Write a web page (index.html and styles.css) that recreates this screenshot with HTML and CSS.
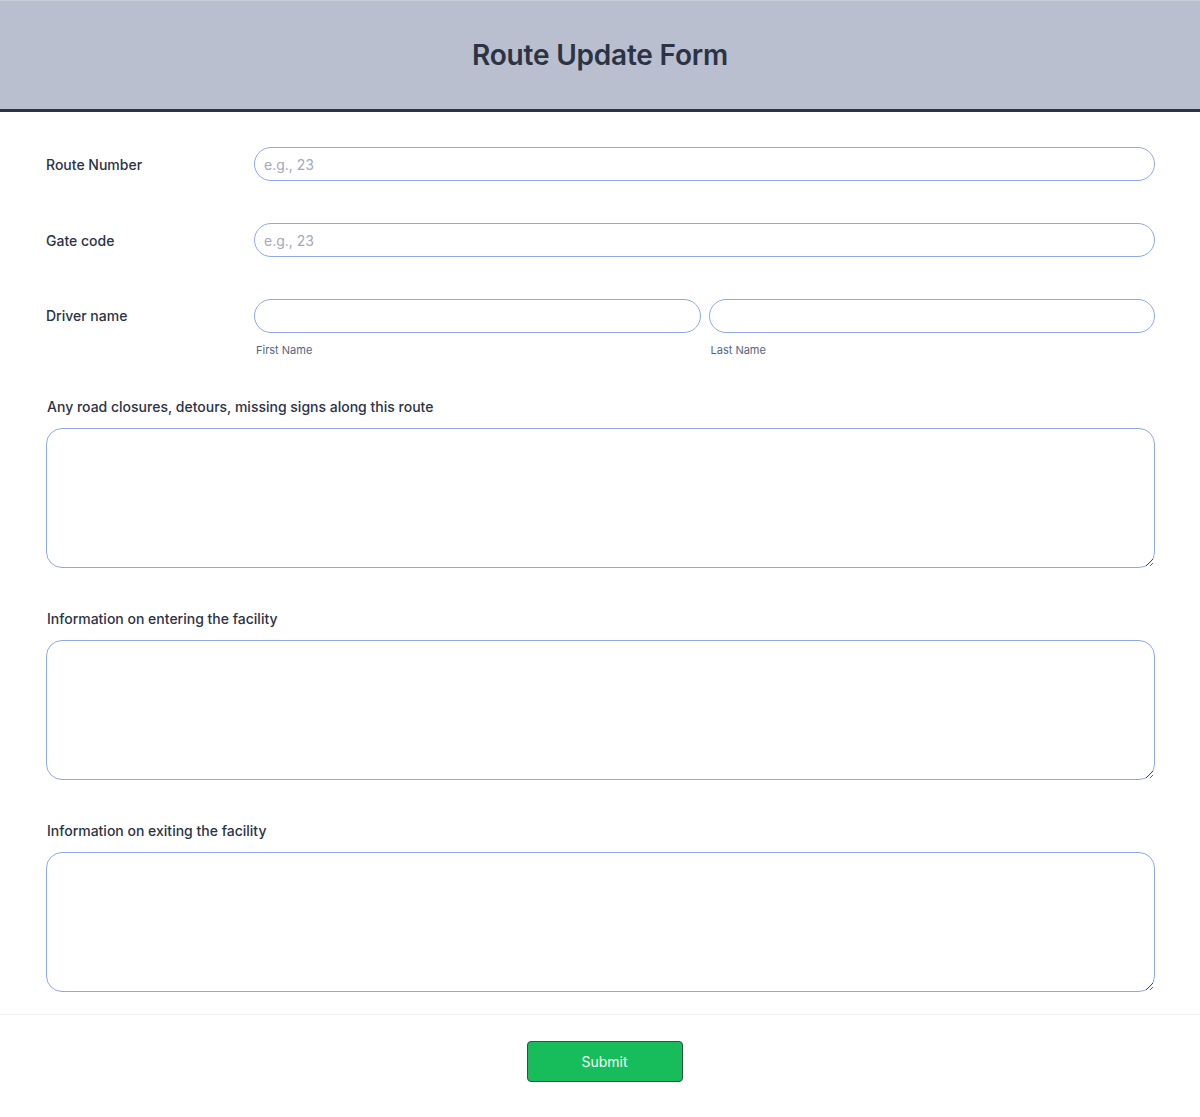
FILE: index.html
```html
<!DOCTYPE html>
<html lang="en">
<head>
<meta charset="utf-8">
<title>Route Update Form</title>
<link rel="stylesheet" href="styles.css">
</head>
<body>
<header class="header">
  <h1 class="title">Route Update Form</h1>
</header>
<form class="form">
  <div class="row">
    <label class="label" for="route">Route Number</label>
    <input class="input" id="route" type="text" placeholder="e.g., 23">
  </div>
  <div class="row">
    <label class="label" for="gate">Gate code</label>
    <input class="input" id="gate" type="text" placeholder="e.g., 23">
  </div>
  <div class="row row-top">
    <label class="label label-name">Driver name</label>
    <div class="names">
      <div class="name-field">
        <input class="input input-name" type="text">
        <span class="sublabel">First Name</span>
      </div>
      <div class="name-field">
        <input class="input input-name" type="text">
        <span class="sublabel">Last Name</span>
      </div>
    </div>
  </div>
  <div class="block">
    <label class="block-label">Any road closures, detours, missing signs along this route</label>
    <textarea class="textarea"></textarea>
  </div>
  <div class="block">
    <label class="block-label">Information on entering the facility</label>
    <textarea class="textarea"></textarea>
  </div>
  <div class="block block-last">
    <label class="block-label">Information on exiting the facility</label>
    <textarea class="textarea"></textarea>
  </div>
  <div class="footer">
    <button class="submit" type="button">Submit</button>
  </div>
</form>
</body>
</html>
```
FILE: styles.css
```css
* { box-sizing: border-box; }
body {
  margin: 0;
  background: #ffffff;
  font-family: Inter, "Noto Sans", sans-serif;
  color: #2c3345;
}
.header {
  height: 112px;
  background: #b9bfcf;
  border-top: 1px solid #c9cedb;
  border-bottom: 3px solid #2c3345;
  display: flex;
  align-items: center;
  justify-content: center;
}
.title {
  margin: 0;
  font-size: 28px;
  font-weight: 600;
  color: #2c3345;
  letter-spacing: -0.2px;
}
.form {
  padding: 35px 45px 0 46px;
}
.row {
  display: flex;
  align-items: center;
  margin-bottom: 42px;
}
.row-top {
  align-items: flex-start;
  margin-bottom: 40px;
}
.label {
  width: 208px;
  flex: none;
  font-size: 14px;
  font-weight: 500;
  color: #2c3345;
}
.label-name {
  line-height: 34px;
}
.input {
  flex: 1;
  width: 100%;
  height: 34px;
  border: 1px solid #8fa9e6;
  border-radius: 17px;
  padding: 0 9px;
  font-family: inherit;
  font-size: 14px;
  color: #2c3345;
  background: #fff;
  outline: none;
}
.input-name {
  flex: none;
}
.input::placeholder {
  color: #a3a9ba;
}
.names {
  flex: 1;
  display: flex;
  gap: 8px;
}
.name-field {
  flex: 1;
  display: flex;
  flex-direction: column;
}
.sublabel {
  margin-top: 10px;
  padding-left: 2px;
  font-size: 11px;
  line-height: 14px;
  color: #57647e;
}
.block {
  display: flex;
  flex-direction: column;
  margin-bottom: 41px;
}
.block-last {
  margin-bottom: 0;
}
.block-label {
  padding-left: 1px;
  font-size: 14px;
  font-weight: 500;
  line-height: 20px;
  color: #2c3345;
  margin-bottom: 11px;
}
.textarea {
  width: 100%;
  height: 140px;
  border: 1px solid #8fa9e6;
  border-radius: 16px;
  padding: 9px;
  font-family: inherit;
  font-size: 14px;
  background: #fff;
  outline: none;
  resize: vertical;
}
.footer {
  margin: 22px -45px 0 -46px;
  border-top: 1px solid #edf0f6;
  padding: 26px 0 35px 9px;
  display: flex;
  justify-content: center;
}
.submit {
  width: 156px;
  height: 41px;
  background: #18bd5b;
  border: 1px solid #3c4a44;
  border-radius: 4px;
  color: #f4fff7;
  font-family: inherit;
  font-size: 14px;
  font-weight: 400;
  cursor: pointer;
}
```
